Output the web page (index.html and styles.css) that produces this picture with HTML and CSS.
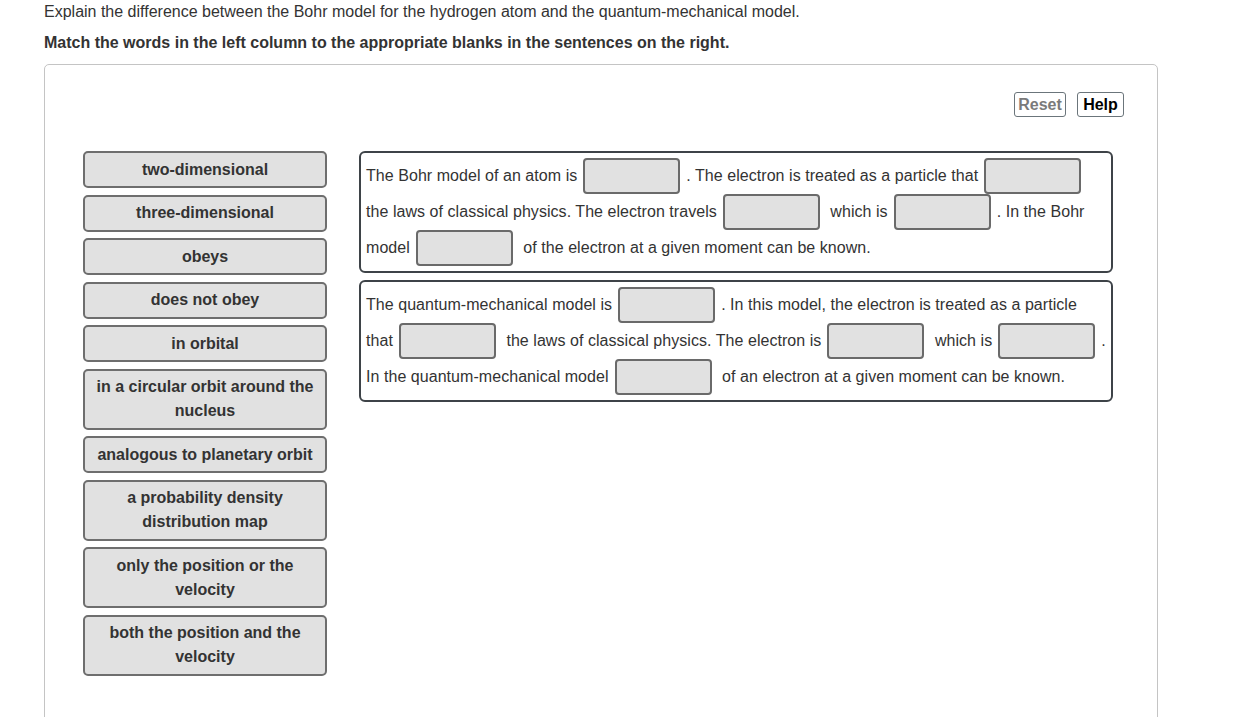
FILE: index.html
```html
<!DOCTYPE html>
<html lang="en">
<head>
  <meta charset="UTF-8">
  <meta name="viewport" content="width=device-width, initial-scale=1.0">
  <title>Bohr vs Quantum-Mechanical Model</title>
  <link rel="stylesheet" href="styles.css">
</head>
<body>
  <p class="question">Explain the difference between the Bohr model for the hydrogen atom and the quantum-mechanical model.</p>
  <p class="instructions">Match the words in the left column to the appropriate blanks in the sentences on the right.</p>

  <div class="activity">
    <div class="toolbar">
      <button class="tool-btn reset" disabled>Reset</button>
      <button class="tool-btn help">Help</button>
    </div>

    <div class="matching">
      <div class="word-bank">
        <div class="word">two-dimensional</div>
        <div class="word">three-dimensional</div>
        <div class="word">obeys</div>
        <div class="word">does not obey</div>
        <div class="word">in orbital</div>
        <div class="word">in a circular orbit around the nucleus</div>
        <div class="word">analogous to planetary orbit</div>
        <div class="word">a probability density distribution map</div>
        <div class="word">only the position or the velocity</div>
        <div class="word">both the position and the velocity</div>
      </div>

      <div class="sentences">
        <div class="sentence">The Bohr model of an atom is<span class="blank"></span>. The electron is treated as a particle that<span class="blank"></span> the laws of classical physics. The electron travels<span class="blank"></span> which is<span class="blank"></span>. In the Bohr model<span class="blank"></span> of the electron at a given moment can be known.</div>
        <div class="sentence">The quantum-mechanical model is<span class="blank"></span>. In this model, the electron is treated as a particle that<span class="blank"></span> the laws of classical physics. The electron is<span class="blank"></span> which is<span class="blank"></span>. In the quantum-mechanical model<span class="blank"></span> of an electron at a given moment can be known.</div>
      </div>
    </div>
  </div>
</body>
</html>
```

FILE: styles.css
```css
body {
  margin: 0;
  padding: 0 44px;
  font-family: "Liberation Sans", Arial, sans-serif;
  font-size: 16px;
  color: #333;
  background-color: #fff;
}

.question {
  margin: 2px 0 0;
  line-height: 20px;
}

.instructions {
  margin: 11px 0 11px;
  line-height: 20px;
  font-weight: bold;
}

.activity {
  width: 1114px;
  min-height: 700px;
  box-sizing: border-box;
  border: 1px solid #c4c4c4;
  border-radius: 5px;
  padding: 27px 33px 0 38px;
}

.toolbar {
  display: flex;
  justify-content: flex-end;
  gap: 11px;
}

.tool-btn {
  height: 25px;
  padding: 0;
  font-family: inherit;
  font-size: 16px;
  font-weight: bold;
  background-color: #fff;
  border: 1px solid #6b757b;
  border-radius: 3px;
  color: #000;
}

.tool-btn.reset {
  width: 52px;
  color: #7a7a7a;
}

.tool-btn.help {
  width: 47px;
}

.matching {
  display: flex;
  gap: 32px;
  margin-top: 34px;
}

.word-bank {
  display: flex;
  flex-direction: column;
  gap: 6.5px;
  width: 244px;
  flex-shrink: 0;
}

.word {
  box-sizing: border-box;
  padding: 4.5px 8px;
  line-height: 24px;
  font-weight: bold;
  text-align: center;
  background-color: #e1e1e1;
  border: 2px solid #6e6e6e;
  border-radius: 5px;
}

.sentences {
  display: flex;
  flex-direction: column;
  gap: 7px;
  width: 754px;
}

.sentence {
  padding: 5px;
  line-height: 36px;
  letter-spacing: 0.05px;
  border: 2px solid #3e4348;
  border-radius: 6px;
}

.blank {
  display: inline-block;
  vertical-align: top;
  box-sizing: border-box;
  width: 97px;
  height: 36px;
  margin: 0 6px;
  background-color: #e1e1e1;
  border: 2px solid #6a6a6a;
  border-radius: 4px;
}
```
